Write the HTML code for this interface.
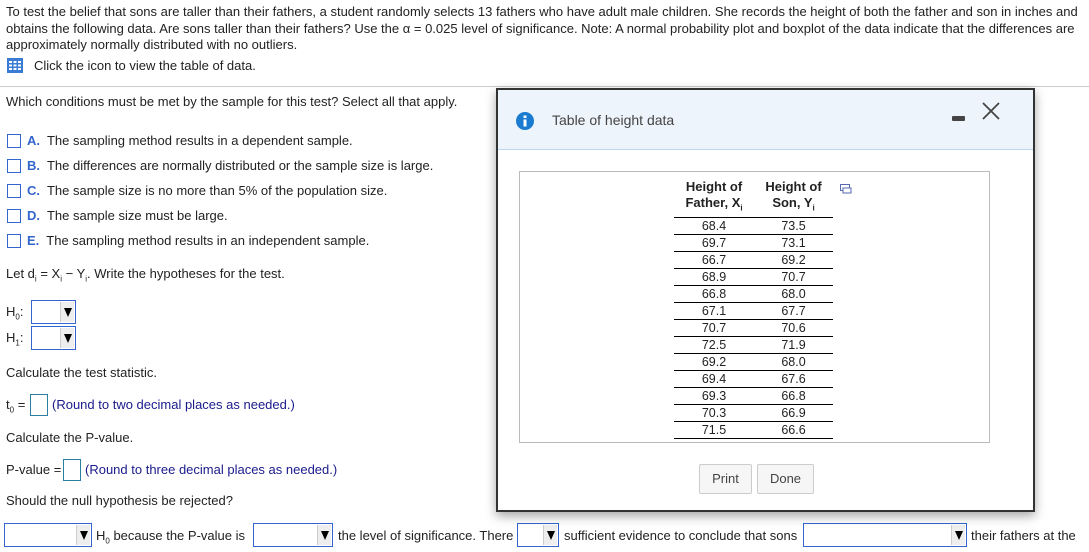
<!DOCTYPE html>
<html><head><style>
body{margin:0;width:1089px;height:552px;overflow:hidden;font-family:"Liberation Sans",Arial,sans-serif;font-size:13px;color:#222;background:#fff;position:relative}
.a{position:absolute;white-space:nowrap}
.cb{position:absolute;width:12px;height:12px;border:1px solid #3366cc;background:#fff}
.lt{color:#3366cc;font-weight:bold}
.dd{position:absolute;border:1px solid #3366cc;background:#fff;height:22px}
.dd i{position:absolute;right:1px;top:1px;width:13px;height:20px;background:#eee;border-left:1px solid #ccc}
.dd i:after{content:"";position:absolute;left:3px;top:6px;border-left:4px solid transparent;border-right:4px solid transparent;border-top:9px solid #000}
.ib{position:absolute;border:1px solid #2a7fa0;width:16px;height:20px;background:#fff}
.blue{color:#1a1a8c}
td{padding:0;height:16px;border-bottom:1px solid #000;text-align:center;font-size:12.5px;line-height:16px}
sub{font-size:8px}
</style></head><body>
<div class="a" style="left:6px;top:4px;line-height:16.5px;white-space:normal;width:1080px">To test the belief that sons are taller than their fathers, a student randomly selects 13 fathers who have adult male children. She records the height of both the father and son in inches and obtains the following data. Are sons taller than their fathers? Use the α = 0.025 level of significance. Note: A normal probability plot and boxplot of the data indicate that the differences are approximately normally distributed with no outliers.</div>
<svg class="a" style="left:7px;top:58px" width="16" height="15"><rect width="16" height="15" fill="#3a7bd5"/><g fill="#fff"><rect x="2" y="3" width="3" height="2"/><rect x="6.5" y="3" width="3" height="2"/><rect x="11" y="3" width="3" height="2"/><rect x="2" y="6.5" width="3" height="2"/><rect x="6.5" y="6.5" width="3" height="2"/><rect x="11" y="6.5" width="3" height="2"/><rect x="2" y="10" width="3" height="2"/><rect x="6.5" y="10" width="3" height="2"/><rect x="11" y="10" width="3" height="2"/></g></svg>
<div class="a" style="left:34px;top:58px">Click the icon to view the table of data.</div>
<div class="a" style="left:0;top:86px;width:1089px;height:1px;background:#ccc"></div>
<div class="a" style="left:6px;top:94px">Which conditions must be met by the sample for this test? Select all that apply.</div>
<div class="cb" style="left:7px;top:134px"></div><div class="a" style="left:27px;top:133px"><span class="lt">A.</span>&nbsp; The sampling method results in a dependent sample.</div>
<div class="cb" style="left:7px;top:159px"></div><div class="a" style="left:27px;top:158px"><span class="lt">B.</span>&nbsp; The differences are normally distributed or the sample size is large.</div>
<div class="cb" style="left:7px;top:184px"></div><div class="a" style="left:27px;top:183px"><span class="lt">C.</span>&nbsp; The sample size is no more than 5% of the population size.</div>
<div class="cb" style="left:7px;top:209px"></div><div class="a" style="left:27px;top:208px"><span class="lt">D.</span>&nbsp; The sample size must be large.</div>
<div class="cb" style="left:7px;top:234px"></div><div class="a" style="left:27px;top:233px"><span class="lt">E.</span>&nbsp; The sampling method results in an independent sample.</div>
<div class="a" style="left:6px;top:266px">Let d<sub>i</sub> = X<sub>i</sub> − Y<sub>i</sub>. Write the hypotheses for the test.</div>
<div class="a" style="left:6px;top:304px">H<sub>0</sub>:</div>
<div class="a" style="left:6px;top:330px">H<sub>1</sub>:</div>
<div class="dd" style="left:31px;top:300px;width:43px"><i></i></div>
<div class="dd" style="left:31px;top:326px;width:43px"><i></i></div>
<div class="a" style="left:6px;top:365px">Calculate the test statistic.</div>
<div class="a" style="left:6px;top:397px">t<sub>0</sub> =</div>
<div class="ib" style="left:30px;top:394px"></div>
<div class="a blue" style="left:52px;top:397px">(Round to two decimal places as needed.)</div>
<div class="a" style="left:6px;top:430px">Calculate the P-value.</div>
<div class="a" style="left:6px;top:462px">P-value =</div>
<div class="ib" style="left:63px;top:459px"></div>
<div class="a blue" style="left:85px;top:462px">(Round to three decimal places as needed.)</div>
<div class="a" style="left:6px;top:493px">Should the null hypothesis be rejected?</div>
<div class="dd" style="left:4px;top:523px;width:86px"><i></i></div>
<div class="a" style="left:96px;top:528px">H<sub>0</sub> because the P-value is</div>
<div class="dd" style="left:253px;top:523px;width:78px"><i></i></div>
<div class="a" style="left:338px;top:528px">the level of significance. There</div>
<div class="dd" style="left:517px;top:523px;width:40px"><i></i></div>
<div class="a" style="left:564px;top:528px">sufficient evidence to conclude that sons</div>
<div class="dd" style="left:803px;top:523px;width:162px"><i></i></div>
<div class="a" style="left:971px;top:528px">their fathers at the</div>

<div class="a" style="left:496px;top:88px;width:535px;height:420px;border:2px solid #333;background:#fff;box-shadow:0 4px 10px rgba(0,0,0,.35)">
 <div style="position:absolute;left:0;top:0;width:535px;height:59px;background:#eef4fc;border-bottom:1px solid #bcd7f0"></div>
 <svg style="position:absolute;left:18px;top:22px" width="18" height="18"><circle cx="9" cy="9" r="9" fill="#1a7bd0"/><rect x="7.5" y="7.5" width="3" height="7" fill="#fff"/><rect x="7.5" y="3.5" width="3" height="2.6" fill="#fff"/></svg>
 <div class="a" style="left:54px;top:22px;font-size:14px;color:#444">Table of height data</div>
 <div class="a" style="left:454px;top:26px;width:13px;height:5px;background:#444;border-radius:1px"></div>
 <svg style="position:absolute;left:484px;top:12px" width="18" height="18"><path d="M1 1L17 17M17 1L1 17" stroke="#444" stroke-width="1.8"/></svg>
 <div class="a" style="left:21px;top:81px;width:469px;height:270px;border:1px solid #bbb"></div>
 <svg style="position:absolute;left:342px;top:94px" width="12" height="10"><rect x="0.5" y="0.5" width="9" height="6" fill="none" stroke="#556ab0"/><rect x="3" y="4" width="8" height="5" fill="#fff" stroke="#556ab0"/></svg>
 <table style="position:absolute;left:176px;top:89px;width:159px;border-collapse:collapse">
  <tr><td style="font-weight:bold;height:34px;font-size:13px;line-height:16px;border-bottom:1px solid #000;vertical-align:top">Height of<br>Father, X<sub>i</sub></td><td style="font-weight:bold;font-size:13px;line-height:16px;vertical-align:top">Height of<br>Son, Y<sub>i</sub></td></tr>
  <tr><td>68.4</td><td>73.5</td></tr><tr><td>69.7</td><td>73.1</td></tr><tr><td>66.7</td><td>69.2</td></tr><tr><td>68.9</td><td>70.7</td></tr><tr><td>66.8</td><td>68.0</td></tr><tr><td>67.1</td><td>67.7</td></tr><tr><td>70.7</td><td>70.6</td></tr><tr><td>72.5</td><td>71.9</td></tr><tr><td>69.2</td><td>68.0</td></tr><tr><td>69.4</td><td>67.6</td></tr><tr><td>69.3</td><td>66.8</td></tr><tr><td>70.3</td><td>66.9</td></tr><tr><td>71.5</td><td>66.6</td></tr>
 </table>
 <div class="a" style="left:201px;top:374px;width:51px;height:28px;border:1px solid #ccc;border-radius:2px;background:#f6f6f6;text-align:center;line-height:28px;font-size:13px;color:#444">Print</div>
 <div class="a" style="left:259px;top:374px;width:55px;height:28px;border:1px solid #ccc;border-radius:2px;background:#f6f6f6;text-align:center;line-height:28px;font-size:13px;color:#444">Done</div>
</div>
</body></html>
